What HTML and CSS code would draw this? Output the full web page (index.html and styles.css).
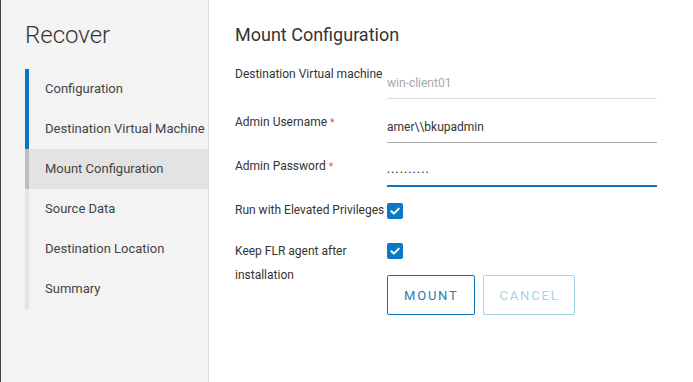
FILE: index.html
```html
<!DOCTYPE html>
<html lang="en">
<head>
<meta charset="utf-8">
<title>Recover</title>
<link rel="stylesheet" href="styles.css">
</head>
<body>
<div class="app">
  <aside class="sidebar">
    <h1 class="side-title">Recover</h1>
    <ul class="steps">
      <li class="step done">Configuration</li>
      <li class="step done">Destination Virtual Machine</li>
      <li class="step active">Mount Configuration</li>
      <li class="step">Source Data</li>
      <li class="step">Destination Location</li>
      <li class="step">Summary</li>
    </ul>
  </aside>
  <main class="main">
    <h2 class="main-title">Mount Configuration</h2>
    <div class="form">
      <div class="row row-first">
        <div class="label">Destination Virtual machine</div>
        <div class="field field-readonly"><span class="value muted">win-client01</span></div>
      </div>
      <div class="row">
        <div class="label">Admin Username <span class="req">*</span></div>
        <div class="field"><span class="value">amer\\bkupadmin</span></div>
      </div>
      <div class="row">
        <div class="label">Admin Password <span class="req">*</span></div>
        <div class="field field-focus"><span class="value dots">••••••••••</span></div>
      </div>
      <div class="row row-check">
        <div class="label">Run with Elevated Privileges</div>
        <div class="control">
          <span class="checkbox"><svg viewBox="0 0 16 16" width="16" height="16"><path d="M4.3 8.2 L6.9 10.6 L11.8 5.6" fill="none" stroke="#fff" stroke-width="2" stroke-linecap="round" stroke-linejoin="round"/></svg></span>
        </div>
      </div>
      <div class="row row-last">
        <div class="label label-tall">Keep FLR agent after installation</div>
        <div class="control control-col">
          <span class="checkbox checkbox-flr"><svg viewBox="0 0 16 16" width="16" height="16"><path d="M4.3 8.2 L6.9 10.6 L11.8 5.6" fill="none" stroke="#fff" stroke-width="2" stroke-linecap="round" stroke-linejoin="round"/></svg></span>
          <div class="buttons">
            <button class="btn btn-primary" type="button">MOUNT</button>
            <button class="btn btn-disabled" type="button">CANCEL</button>
          </div>
        </div>
      </div>
    </div>
  </main>
</div>
</body>
</html>
```

FILE: styles.css
```css
* { box-sizing: border-box; }

html, body {
  margin: 0;
  padding: 0;
  background: #ffffff;
}

body {
  font-family: Roboto, "Liberation Sans", Arial, sans-serif;
  color: #333333;
}

.app {
  display: flex;
  height: 382px;
  width: 693px;
  overflow: hidden;
}

.sidebar {
  width: 209px;
  flex: 0 0 209px;
  background: #f3f3f3;
  border-left: 1px solid #444444;
  border-right: 1px solid #dcdcdc;
  padding: 21px 0 0 24px;
}

.side-title {
  margin: 0 0 20px 0;
  font-size: 24px;
  line-height: 28px;
  font-weight: 300;
  color: #333333;
}

.steps {
  list-style: none;
  margin: 0;
  padding: 0;
}

.step {
  height: 40px;
  line-height: 40px;
  font-size: 13px;
  color: #444444;
  border-left: 4px solid #e3e3e3;
  padding-left: 16px;
  white-space: nowrap;
}

.step.done {
  border-left-color: #0a76c0;
}

.step.active {
  border-left-color: #bdbdbd;
  background: #e3e3e3;
}

.main {
  flex: 1;
  padding: 24px 0 0 26px;
}

.main-title {
  margin: 0 0 19px 0;
  font-size: 18px;
  line-height: 21px;
  font-weight: 400;
  color: #333333;
}

.form {
  display: flex;
  flex-direction: column;
  gap: 13px;
}

.row {
  display: flex;
  align-items: flex-start;
}

.label {
  width: 152px;
  flex: 0 0 152px;
  font-size: 12px;
  line-height: 20px;
  color: #333333;
}

.label-tall {
  line-height: 24px;
  padding-right: 12px;
}

.req {
  color: #d9534f;
  font-size: 10px;
}

.field {
  width: 270px;
  height: 31px;
  border-bottom: 1px solid #a9a9a9;
  font-size: 12px;
  line-height: 30px;
  color: #333333;
}

.row-first .field {
  margin-top: 4px;
}

.field-readonly {
  border-bottom-color: #dddddd;
}

.field-focus {
  border-bottom: 2px solid #0a76c0;
  line-height: 29px;
}

.muted {
  color: #a8a8a8;
}

.dots {
  font-size: 8px;
  letter-spacing: 1.6px;
  color: #333333;
  position: relative;
  top: 1px;
}

.control {
  display: flex;
}

.row-check .control {
  padding-top: 3px;
}

.row-last {
  margin-top: 6px;
}

.control-col {
  flex-direction: column;
  align-items: flex-start;
}

.checkbox {
  display: block;
  width: 16px;
  height: 16px;
  border-radius: 2px;
  background: #0a78c2;
}

.checkbox svg {
  display: block;
}

.checkbox-flr {
  margin-top: 4px;
}

.buttons {
  display: flex;
  gap: 8px;
  margin-top: 16px;
}

.btn {
  height: 40px;
  padding: 0 15px 0 16px;
  background: #ffffff;
  font-family: Roboto, "Liberation Sans", Arial, sans-serif;
  font-size: 13px;
  letter-spacing: 1.8px;
  border-radius: 2px;
  cursor: pointer;
}

.btn-primary {
  border: 1px solid #0b74b5;
  color: #2b7cb3;
}

.btn-disabled {
  border: 1px solid #a3d2e8;
  color: #a8d3e8;
}
```
